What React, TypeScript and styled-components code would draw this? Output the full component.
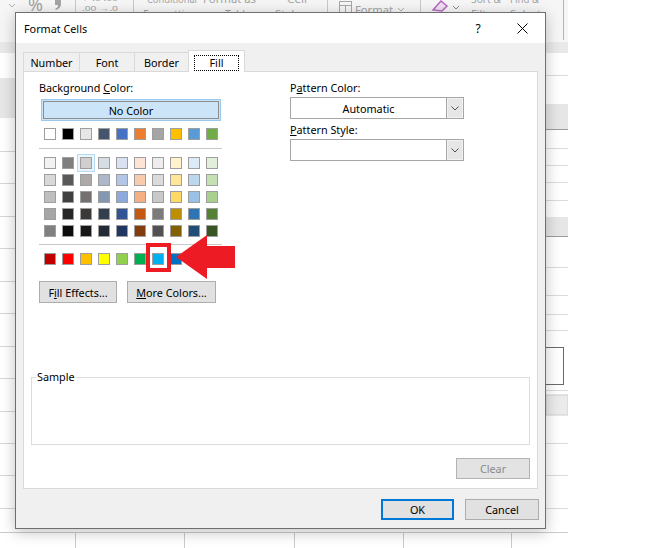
import styled, { createGlobalStyle } from "styled-components";

const UI_SIZE = "10.8px";

const GlobalStyle = createGlobalStyle`
	html, body {
		margin: 0;
		padding: 0;
		background: #fff;
	}
	body {
		font-family: "Noto Sans", "Open Sans", sans-serif;
		font-size: ${UI_SIZE};
		color: #000;
	}
	* {
		box-sizing: border-box;
	}
`;

const themeColors = [
	["#FFFFFF", "#F2F2F2", "#D9D9D9", "#BFBFBF", "#A6A6A6", "#808080"],
	["#000000", "#7F7F7F", "#595959", "#404040", "#262626", "#0D0D0D"],
	["#E7E6E6", "#D0CECE", "#AEAAAA", "#767171", "#3B3838", "#181717"],
	["#44546A", "#D6DCE4", "#ADB9CA", "#8497B0", "#333F4F", "#222A35"],
	["#4472C4", "#D9E1F2", "#B4C6E7", "#8EA9DB", "#305496", "#203764"],
	["#ED7D31", "#FCE4D6", "#F8CBAD", "#F4B084", "#C65911", "#833C0C"],
	["#A5A5A5", "#EDEDED", "#DBDBDB", "#C9C9C9", "#7B7B7B", "#525252"],
	["#FFC000", "#FFF2CC", "#FFE699", "#FFD966", "#BF8F00", "#806000"],
	["#5B9BD5", "#DDEBF7", "#BDD7EE", "#9BC2E6", "#2F75B5", "#1F4E78"],
	["#70AD47", "#E2EFDA", "#C6E0B4", "#A9D08E", "#548235", "#375623"],
];

const standardColors = ["#C00000", "#FF0000", "#FFC000", "#FFFF00", "#92D050", "#00B050", "#00B0F0", "#0070C0", "#002060", "#7030A0"];

const tabs = [
	{ label: "Number", width: 57 },
	{ label: "Font", width: 56 },
	{ label: "Border", width: 55 },
	{ label: "Fill", width: 57, active: true },
];

// faded ribbon labels peeking out above the dialog
const ribbonWords = [
	{ t: "Conditional", x: 147, y: 3, w: 50 },
	{ t: "Format as", x: 203, y: 3, w: 53 },
	{ t: "Cell", x: 287, y: 3, w: 20 },
	{ t: "Formatting", x: 143, y: 18, w: 54 },
	{ t: "Table", x: 225, y: 18, w: 26 },
	{ t: "Styles", x: 275, y: 18, w: 31 },
	{ t: "Format", x: 355, y: 14, w: 38 },
	{ t: "Sort &", x: 471, y: 3, w: 30 },
	{ t: "Find &", x: 510, y: 3, w: 29 },
	{ t: "Filter", x: 471, y: 18, w: 26 },
	{ t: "Select", x: 510, y: 18, w: 31 },
];

function SheetBackdrop() {
	const leftRows = [151, 183, 216, 248, 281, 313, 346, 378, 411, 443, 475, 508];
	const rightRows = [75, 148, 165, 182, 200, 267, 295, 314, 330, 390, 443, 475, 508];
	const cols = [75, 184, 294, 403, 511];
	return (
		<Backdrop width="568" height="548" viewBox="0 0 568 548">
			<rect x="0" y="0" width="568" height="42" fill="#f6f6f6" />
			<rect x="0" y="42" width="568" height="11" fill="#e9e9e9" />
			<rect x="0" y="78" width="15" height="40" fill="#e7e7e7" />
			<rect x="546" y="104" width="22" height="25" fill="#e6e6e6" />
			<rect x="546" y="217" width="22" height="19" fill="#e6e6e6" />
			<rect x="546" y="395" width="22" height="20" fill="#ebebeb" stroke="#cfcfcf" />
			<line x1="546" y1="129.5" x2="568" y2="129.5" stroke="#9c9c9c" />
			<line x1="546" y1="236.5" x2="568" y2="236.5" stroke="#9c9c9c" />
			<rect x="540.5" y="347.5" width="23" height="37" fill="none" stroke="#6a6a6a" />
			{leftRows.map((y) => (
				<line key={"l" + y} x1="0" y1={y + 0.5} x2="15" y2={y + 0.5} stroke="#d6d6d6" />
			))}
			{rightRows.map((y) => (
				<line key={"r" + y} x1="546" y1={y + 0.5} x2="568" y2={y + 0.5} stroke="#dcdcdc" />
			))}
			<line x1="0" y1="532.5" x2="568" y2="532.5" stroke="#cbcbcb" />
			{cols.map((x) => (
				<line key={"c" + x} x1={x + 0.5} y1="532" x2={x + 0.5} y2="548" stroke="#cbcbcb" />
			))}
			<line x1="563.5" y1="0" x2="563.5" y2="40" stroke="#b4b4b4" />

			<g fill="#a3a3a3" fontFamily="Noto Sans, sans-serif">
				<path d="M9 4 l3 3 l3 -3" fill="none" stroke="#b0b0b0" />
				<text x="28" y="11" fontSize="18">%</text>
				<path d="M55 0 h6 v4 c0 3 -2 5 -5 6 l-1 -1 c2 -1 3 -2 3 -4 h-3 z" />
				<text x="82" y="1" fontSize="7" textLength="36" lengthAdjust="spacingAndGlyphs">←.0 .00</text>
				<text x="82" y="11" fontSize="7" textLength="36" lengthAdjust="spacingAndGlyphs">.00 →.0</text>
				{ribbonWords.map((w) => (
					<text key={w.t + w.x} x={w.x} y={w.y} fontSize="10.5" textLength={w.w} lengthAdjust="spacingAndGlyphs">
						{w.t}
					</text>
				))}
				<rect x="339.5" y="1.5" width="12" height="11" fill="none" stroke="#a8a8a8" />
				<line x1="339.5" y1="5.5" x2="351.5" y2="5.5" stroke="#a8a8a8" />
				<line x1="345.5" y1="5.5" x2="345.5" y2="12" stroke="#a8a8a8" />
				<path d="M398 8 l3 3 l3 -3" fill="none" stroke="#b0b0b0" />
				<path d="M433 10 l8 -9 l6 5 l-5 5 z" fill="#efe0f2" stroke="#b468c2" strokeWidth="1.5" />
				<path d="M453 6 l3 3 l3 -3" fill="none" stroke="#8a8a8a" />
			</g>
			{[75.5, 133.5, 327.5, 420.5].map((x) => (
				<line key={"s" + x} x1={x} y1="0" x2={x} y2="12" stroke="#c9c9c9" />
			))}
		</Backdrop>
	);
}

function Chevron() {
	return (
		<svg width="8" height="5" viewBox="0 0 8 5">
			<polyline points="0.5,0.5 4,4 7.5,0.5" fill="none" stroke="#505050" strokeWidth="1" />
		</svg>
	);
}

function CloseGlyph() {
	return (
		<svg width="11" height="11" viewBox="0 0 11 11">
			<path d="M0.5 0.5 L10.5 10.5 M10.5 0.5 L0.5 10.5" stroke="#000" strokeWidth="1" />
		</svg>
	);
}

function PointerArrow() {
	return (
		<Arrow width="60" height="44" viewBox="0 0 60 44">
			<polygon points="0,22 31,0 31,11 59,11 59,33 31,33 31,44" fill="#ED1C24" />
		</Arrow>
	);
}

export default function App() {
	return (
		<Stage>
			<GlobalStyle />
			<SheetBackdrop />
			<Dialog>
				<TitleBar>
					<Title>Format Cells</Title>
					<CaptionButton $w={30} $mr={6}>?</CaptionButton>
					<CaptionButton $w={46}>
						<CloseGlyph />
					</CaptionButton>
				</TitleBar>

				<Body>
					<TabList>
						{tabs.map((t) => (
							<Tab key={t.label} $w={t.width} $active={t.active}>
								{t.active ? <FocusText>{t.label}</FocusText> : t.label}
							</Tab>
						))}
					</TabList>

					<Panel>
						<Top>
							<Column>
								<FieldLabel>
									Background <Key>C</Key>olor:
								</FieldLabel>
								<NoColorButton type="button">No Color</NoColorButton>

								<SwatchRow $mt={7}>
									{themeColors.map((c) => (
										<Swatch key={c[0]} $c={c[0]} />
									))}
								</SwatchRow>
								<Divider $mt={8} />
								<ThemeGrid>
									{[1, 2, 3, 4, 5].map((r) => (
										<SwatchRow key={r}>
											{themeColors.map((c, i) => (
												<Swatch key={c[r]} $c={c[r]} $hl={r === 1 && i === 2} />
											))}
										</SwatchRow>
									))}
								</ThemeGrid>
								<Divider $mt={7} />
								<SwatchRow $mt={8}>
									{standardColors.map((c) => (
										<Swatch key={c} $c={c} />
									))}
									<PickFrame />
									<PointerArrow />
								</SwatchRow>

								<ButtonRow>
									<PushButton type="button" $w={78} $h={22}>
										F<Key>i</Key>ll Effects...
									</PushButton>
									<PushButton type="button" $w={89} $h={22}>
										<Key>M</Key>ore Colors...
									</PushButton>
								</ButtonRow>
							</Column>

							<Column>
								<FieldLabel>
									P<Key>a</Key>ttern Color:
								</FieldLabel>
								<Select $mt={1}>
									<SelectValue>Automatic</SelectValue>
									<DropButton>
										<Chevron />
									</DropButton>
								</Select>
								<FieldLabel $mt={3}>
									<Key>P</Key>attern Style:
								</FieldLabel>
								<Select $mt={1}>
									<SelectValue />
									<DropButton>
										<Chevron />
									</DropButton>
								</Select>
							</Column>
						</Top>

						<Sample>
							<legend>Sample</legend>
						</Sample>

						<ClearRow>
							<PushButton type="button" $w={74} $h={21} disabled>
								Clear
							</PushButton>
						</ClearRow>
					</Panel>

					<Footer>
						<PushButton type="button" $w={73} $h={21} $primary>
							OK
						</PushButton>
						<PushButton type="button" $w={74} $h={21}>
							Cancel
						</PushButton>
					</Footer>
				</Body>
			</Dialog>
		</Stage>
	);
}

const Stage = styled.div`
	position: relative;
	width: 672px;
	height: 548px;
	overflow: hidden;
	padding: 12px 0 0 15px;
	background: #fff;
`;

const Backdrop = styled.svg`
	position: absolute;
	left: 0;
	top: 0;
	z-index: 0;
`;

const Dialog = styled.section`
	position: relative;
	z-index: 1;
	width: 531px;
	height: 517px;
	display: flex;
	flex-direction: column;
	background: #f0f0f0;
	border: 1px solid #6f6f6f;
	box-shadow: 0 3px 14px rgba(0, 0, 0, 0.24);
`;

const TitleBar = styled.header`
	display: flex;
	align-items: center;
	height: 30px;
	background: #fff;
	padding-left: 8px;
`;

const Title = styled.h1`
	flex: 1;
	margin: 0;
	font-size: ${UI_SIZE};
	font-weight: 400;
`;

const CaptionButton = styled.button<{ $w: number; $mr?: number }>`
	display: flex;
	align-items: center;
	justify-content: center;
	width: ${(p) => p.$w}px;
	height: 30px;
	margin-right: ${(p) => p.$mr ?? 0}px;
	padding: 0;
	border: 0;
	background: transparent;
	font-family: inherit;
	font-size: 12px;
	color: #000;
`;

const Body = styled.div`
	flex: 1;
	display: flex;
	flex-direction: column;
	padding: 7px 7px 0 7px;
`;

const TabList = styled.div`
	display: flex;
	align-items: flex-end;
	height: 21px;
	position: relative;
	z-index: 1;
`;

const Tab = styled.div<{ $w: number; $active?: boolean }>`
	display: flex;
	align-items: center;
	justify-content: center;
	width: ${(p) => p.$w}px;
	height: ${(p) => (p.$active ? 22 : 19)}px;
	margin-bottom: ${(p) => (p.$active ? -1 : 0)}px;
	margin-left: -1px;
	padding-top: ${(p) => (p.$active ? 0 : 1)}px;
	background: ${(p) => (p.$active ? "#fff" : "#f0f0f0")};
	border: 1px solid #d9d9d9;
	border-bottom: none;
	position: relative;
	z-index: ${(p) => (p.$active ? 2 : 1)};

	&:first-child {
		margin-left: 0;
	}
`;

const FocusText = styled.span`
	padding: 0 15px;
	line-height: 14px;
	border: 1px dotted #000;
	margin-top: 2px;
`;

const Panel = styled.div`
	height: 418px;
	display: flex;
	flex-direction: column;
	padding: 8px 7px 9px 7px;
	background: #fff;
	border: 1px solid #d9d9d9;
`;

const Top = styled.div`
	display: grid;
	grid-template-columns: 183px 174px;
	column-gap: 68px;
	padding-left: 8px;
`;

const Column = styled.div`
	display: flex;
	flex-direction: column;
	align-items: flex-start;
`;

const FieldLabel = styled.div<{ $mt?: number }>`
	height: 16px;
	line-height: 16px;
	margin-top: ${(p) => p.$mt ?? 0}px;
	white-space: nowrap;
`;

const Key = styled.span`
	text-decoration: underline;
`;

const NoColorButton = styled.button`
	width: 180px;
	height: 22px;
	margin: 3px 0 0 2px;
	padding: 0;
	background: #cce4f7;
	border: 1px solid #99c9ef;
	box-shadow: inset 0 0 0 1px #cce4f7, inset 0 0 0 2px #8c8c8c;
	font-family: inherit;
	font-size: ${UI_SIZE};
	color: #000;
`;

const SwatchRow = styled.div<{ $mt?: number }>`
	position: relative;
	display: flex;
	gap: 6px;
	padding-left: 5px;
	margin-top: ${(p) => p.$mt ?? 0}px;
`;

const Swatch = styled.span<{ $c: string; $hl?: boolean }>`
	width: 12px;
	height: 12px;
	background: ${(p) => p.$c};
	border: 1px solid #9e9e9e;
	box-shadow: ${(p) => (p.$hl ? "0 0 0 2px #eaf5fd, 0 0 0 3px #b7daf4" : "none")};
`;

const Divider = styled.hr<{ $mt: number }>`
	width: 183px;
	height: 0;
	margin: ${(p) => p.$mt}px 0 0 0;
	border: 0;
	border-top: 1px solid #c8c8c8;
`;

const ThemeGrid = styled.div`
	display: flex;
	flex-direction: column;
	gap: 5px;
	margin-top: 8px;
`;

const PickFrame = styled.span`
	position: absolute;
	left: 107px;
	top: -10px;
	width: 25px;
	height: 29px;
	border: 4px solid #ed1c24;
`;

const Arrow = styled.svg`
	position: absolute;
	left: 137px;
	top: -18px;
`;

const ButtonRow = styled.div`
	display: flex;
	gap: 10px;
	margin-top: 16px;
`;

const PushButton = styled.button<{ $w: number; $h: number; $primary?: boolean }>`
	width: ${(p) => p.$w}px;
	height: ${(p) => p.$h}px;
	padding: 0;
	background: #e1e1e1;
	border: ${(p) => (p.$primary ? "2px solid #0078d7" : "1px solid #adadad")};
	font-family: inherit;
	font-size: ${UI_SIZE};
	color: #000;

	&:disabled {
		color: #8c8c8c;
		background: #e3e3e3;
		border-color: #b3b3b3;
	}
`;

const Select = styled.div<{ $mt?: number }>`
	display: flex;
	width: 174px;
	height: 22px;
	margin-top: ${(p) => p.$mt ?? 0}px;
	background: #fff;
	border: 1px solid #a6a6a6;
`;

const SelectValue = styled.div`
	flex: 1;
	display: flex;
	align-items: center;
	justify-content: center;
`;

const DropButton = styled.div`
	display: flex;
	align-items: center;
	justify-content: center;
	width: 17px;
	background: #e6e6e6;
	border-left: 1px solid #a6a6a6;
	box-shadow: inset 0 0 0 1px #f2f2f2;
`;

const Sample = styled.fieldset`
	height: 75px;
	min-width: 0;
	margin: 67px 0 0 0;
	padding: 0;
	border: 1px solid #dcdcdc;

	legend {
		margin-left: 4px;
		padding: 0 1px;
		line-height: 14px;
		font-size: ${UI_SIZE};
	}
`;

const ClearRow = styled.div`
	display: flex;
	justify-content: flex-end;
	margin-top: 13px;
`;

const Footer = styled.div`
	display: flex;
	justify-content: flex-end;
	gap: 11px;
	margin-right: -1px;
	padding-top: 10px;
`;
